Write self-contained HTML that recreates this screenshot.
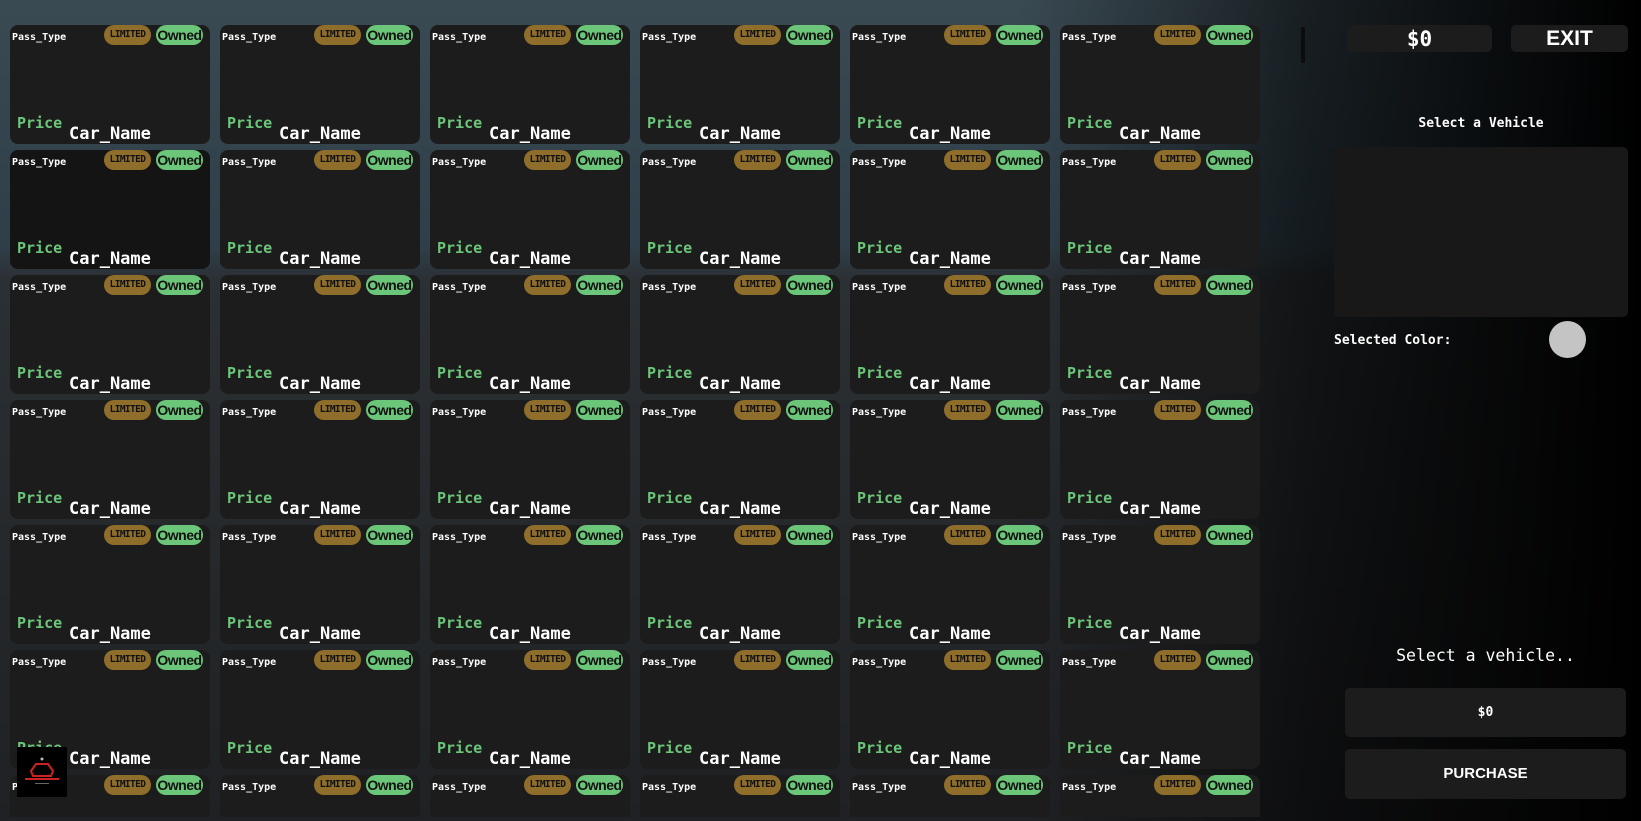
<!DOCTYPE html>
<html><head><meta charset="utf-8"><style>
*{margin:0;padding:0;box-sizing:border-box}
html,body{width:1641px;height:821px;overflow:hidden}
body{position:relative;font-family:"DejaVu Sans Mono","Liberation Mono",monospace;
background:linear-gradient(90deg,rgba(0,0,0,0) 0%,rgba(0,0,0,0) 62%,rgba(0,0,0,.6) 80%,#000 100%),
linear-gradient(180deg,#3a4a53 0%,#2f3f49 30%,#2b3034 34%,#25282b 70%,#1f2124 100%);}
#grid{position:absolute;left:10px;top:25px;width:1250px;height:792px;overflow:hidden;display:flex;flex-wrap:wrap;column-gap:10px;row-gap:6px;align-content:flex-start}
.c{width:200px;height:119px;background:#1c1c1c;border-radius:8px;position:relative;flex:none}
.p{position:absolute;left:2px;top:7px;font-size:10px;font-weight:bold;color:#fff}
.l{position:absolute;left:94px;top:0;width:47px;height:20px;border-radius:10px;background:#8e6e2a;color:#111;font-size:9.5px;font-weight:bold;text-align:center;line-height:20px;letter-spacing:-.6px}
.o{position:absolute;left:146px;top:0;width:47px;height:20px;border-radius:10px;background:#6cc67a;color:#111;font-family:"Liberation Sans",sans-serif;font-size:14px;font-weight:bold;text-align:center;line-height:20px;letter-spacing:-.5px}
.pr{position:absolute;left:7px;top:89px;font-size:15px;font-weight:bold;color:#6cc67a}
.n{position:absolute;left:59px;top:99px;font-size:17px;font-weight:bold;color:#fff}
.bx{position:absolute;background:#1c1c1c;border-radius:5px;color:#fff;text-align:center;font-family:"Liberation Sans",sans-serif;font-weight:bold}
.t{position:absolute;color:#fff;font-weight:bold}
</style></head><body>
<div id="grid">
<div class="c"><div class="p">Pass_Type</div><div class="l">LIMITED</div><div class="o">Owned</div><div class="pr">Price</div><div class="n">Car_Name</div></div>
<div class="c"><div class="p">Pass_Type</div><div class="l">LIMITED</div><div class="o">Owned</div><div class="pr">Price</div><div class="n">Car_Name</div></div>
<div class="c"><div class="p">Pass_Type</div><div class="l">LIMITED</div><div class="o">Owned</div><div class="pr">Price</div><div class="n">Car_Name</div></div>
<div class="c"><div class="p">Pass_Type</div><div class="l">LIMITED</div><div class="o">Owned</div><div class="pr">Price</div><div class="n">Car_Name</div></div>
<div class="c"><div class="p">Pass_Type</div><div class="l">LIMITED</div><div class="o">Owned</div><div class="pr">Price</div><div class="n">Car_Name</div></div>
<div class="c"><div class="p">Pass_Type</div><div class="l">LIMITED</div><div class="o">Owned</div><div class="pr">Price</div><div class="n">Car_Name</div></div>
<div class="c" style="background:#141414"><div class="p">Pass_Type</div><div class="l">LIMITED</div><div class="o">Owned</div><div class="pr">Price</div><div class="n">Car_Name</div></div>
<div class="c"><div class="p">Pass_Type</div><div class="l">LIMITED</div><div class="o">Owned</div><div class="pr">Price</div><div class="n">Car_Name</div></div>
<div class="c"><div class="p">Pass_Type</div><div class="l">LIMITED</div><div class="o">Owned</div><div class="pr">Price</div><div class="n">Car_Name</div></div>
<div class="c"><div class="p">Pass_Type</div><div class="l">LIMITED</div><div class="o">Owned</div><div class="pr">Price</div><div class="n">Car_Name</div></div>
<div class="c"><div class="p">Pass_Type</div><div class="l">LIMITED</div><div class="o">Owned</div><div class="pr">Price</div><div class="n">Car_Name</div></div>
<div class="c"><div class="p">Pass_Type</div><div class="l">LIMITED</div><div class="o">Owned</div><div class="pr">Price</div><div class="n">Car_Name</div></div>
<div class="c"><div class="p">Pass_Type</div><div class="l">LIMITED</div><div class="o">Owned</div><div class="pr">Price</div><div class="n">Car_Name</div></div>
<div class="c"><div class="p">Pass_Type</div><div class="l">LIMITED</div><div class="o">Owned</div><div class="pr">Price</div><div class="n">Car_Name</div></div>
<div class="c"><div class="p">Pass_Type</div><div class="l">LIMITED</div><div class="o">Owned</div><div class="pr">Price</div><div class="n">Car_Name</div></div>
<div class="c"><div class="p">Pass_Type</div><div class="l">LIMITED</div><div class="o">Owned</div><div class="pr">Price</div><div class="n">Car_Name</div></div>
<div class="c"><div class="p">Pass_Type</div><div class="l">LIMITED</div><div class="o">Owned</div><div class="pr">Price</div><div class="n">Car_Name</div></div>
<div class="c"><div class="p">Pass_Type</div><div class="l">LIMITED</div><div class="o">Owned</div><div class="pr">Price</div><div class="n">Car_Name</div></div>
<div class="c"><div class="p">Pass_Type</div><div class="l">LIMITED</div><div class="o">Owned</div><div class="pr">Price</div><div class="n">Car_Name</div></div>
<div class="c"><div class="p">Pass_Type</div><div class="l">LIMITED</div><div class="o">Owned</div><div class="pr">Price</div><div class="n">Car_Name</div></div>
<div class="c"><div class="p">Pass_Type</div><div class="l">LIMITED</div><div class="o">Owned</div><div class="pr">Price</div><div class="n">Car_Name</div></div>
<div class="c"><div class="p">Pass_Type</div><div class="l">LIMITED</div><div class="o">Owned</div><div class="pr">Price</div><div class="n">Car_Name</div></div>
<div class="c"><div class="p">Pass_Type</div><div class="l">LIMITED</div><div class="o">Owned</div><div class="pr">Price</div><div class="n">Car_Name</div></div>
<div class="c"><div class="p">Pass_Type</div><div class="l">LIMITED</div><div class="o">Owned</div><div class="pr">Price</div><div class="n">Car_Name</div></div>
<div class="c"><div class="p">Pass_Type</div><div class="l">LIMITED</div><div class="o">Owned</div><div class="pr">Price</div><div class="n">Car_Name</div></div>
<div class="c"><div class="p">Pass_Type</div><div class="l">LIMITED</div><div class="o">Owned</div><div class="pr">Price</div><div class="n">Car_Name</div></div>
<div class="c"><div class="p">Pass_Type</div><div class="l">LIMITED</div><div class="o">Owned</div><div class="pr">Price</div><div class="n">Car_Name</div></div>
<div class="c"><div class="p">Pass_Type</div><div class="l">LIMITED</div><div class="o">Owned</div><div class="pr">Price</div><div class="n">Car_Name</div></div>
<div class="c"><div class="p">Pass_Type</div><div class="l">LIMITED</div><div class="o">Owned</div><div class="pr">Price</div><div class="n">Car_Name</div></div>
<div class="c"><div class="p">Pass_Type</div><div class="l">LIMITED</div><div class="o">Owned</div><div class="pr">Price</div><div class="n">Car_Name</div></div>
<div class="c"><div class="p">Pass_Type</div><div class="l">LIMITED</div><div class="o">Owned</div><div class="pr">Price</div><div class="n">Car_Name</div></div>
<div class="c"><div class="p">Pass_Type</div><div class="l">LIMITED</div><div class="o">Owned</div><div class="pr">Price</div><div class="n">Car_Name</div></div>
<div class="c"><div class="p">Pass_Type</div><div class="l">LIMITED</div><div class="o">Owned</div><div class="pr">Price</div><div class="n">Car_Name</div></div>
<div class="c"><div class="p">Pass_Type</div><div class="l">LIMITED</div><div class="o">Owned</div><div class="pr">Price</div><div class="n">Car_Name</div></div>
<div class="c"><div class="p">Pass_Type</div><div class="l">LIMITED</div><div class="o">Owned</div><div class="pr">Price</div><div class="n">Car_Name</div></div>
<div class="c"><div class="p">Pass_Type</div><div class="l">LIMITED</div><div class="o">Owned</div><div class="pr">Price</div><div class="n">Car_Name</div></div>
<div class="c"><div class="p">Pass_Type</div><div class="l">LIMITED</div><div class="o">Owned</div><div class="pr">Price</div><div class="n">Car_Name</div></div>
<div class="c"><div class="p">Pass_Type</div><div class="l">LIMITED</div><div class="o">Owned</div><div class="pr">Price</div><div class="n">Car_Name</div></div>
<div class="c"><div class="p">Pass_Type</div><div class="l">LIMITED</div><div class="o">Owned</div><div class="pr">Price</div><div class="n">Car_Name</div></div>
<div class="c"><div class="p">Pass_Type</div><div class="l">LIMITED</div><div class="o">Owned</div><div class="pr">Price</div><div class="n">Car_Name</div></div>
<div class="c"><div class="p">Pass_Type</div><div class="l">LIMITED</div><div class="o">Owned</div><div class="pr">Price</div><div class="n">Car_Name</div></div>
<div class="c"><div class="p">Pass_Type</div><div class="l">LIMITED</div><div class="o">Owned</div><div class="pr">Price</div><div class="n">Car_Name</div></div>
</div>
<div style="position:absolute;left:17px;top:747px;width:50px;height:50px;background:#000">
<svg width="50" height="50" viewBox="0 0 50 50"><path d="M14 24 L19 17 H31 L36 24 L34 29 H16 Z" fill="none" stroke="#c22" stroke-width="2"/><circle cx="25" cy="12" r="1.5" fill="#bbb"/><rect x="8" y="31" width="34" height="2" fill="#c22"/><rect x="18" y="36" width="14" height="1" fill="#666"/></svg></div>
<div style="position:absolute;left:1301px;top:27px;width:4px;height:36px;background:#0a0c0e;border-radius:2px"></div>
<div class="bx" style="left:1347px;top:25px;width:145px;height:27px;font-size:21px;line-height:28px;font-family:'DejaVu Sans Mono',monospace">$0</div>
<div class="bx" style="left:1511px;top:25px;width:117px;height:27px;font-size:21px;line-height:27px">EXIT</div>
<div class="t" style="left:1334px;width:294px;top:116px;text-align:center;font-size:13px">Select a Vehicle</div>
<div style="position:absolute;left:1334px;top:147px;width:294px;height:170px;background:#181818;border-radius:5px"></div>
<div class="t" style="left:1334px;top:333px;font-size:13px">Selected Color:</div>
<div style="position:absolute;left:1549px;top:321px;width:37px;height:37px;border-radius:50%;background:#c4c4c4"></div>
<div class="t" style="left:1345px;width:281px;top:646px;text-align:center;font-size:16.5px;font-weight:normal">Select a vehicle..</div>
<div class="bx" style="left:1345px;top:688px;width:281px;height:49px;line-height:49px;font-size:13px;font-family:'DejaVu Sans Mono',monospace">$0</div>
<div class="bx" style="left:1345px;top:749px;width:281px;height:50px;line-height:50px;font-size:15px">PURCHASE</div>
</body></html>
